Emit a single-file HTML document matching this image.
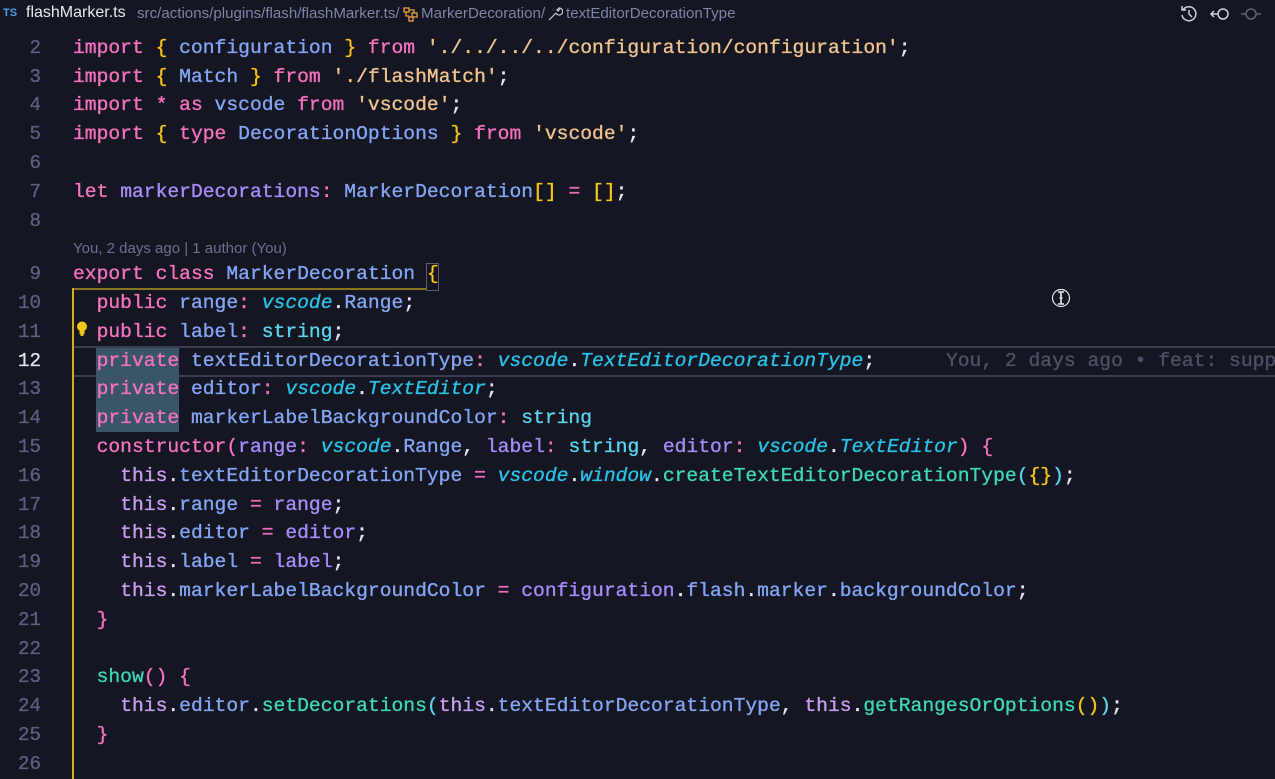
<!DOCTYPE html>
<html><head><meta charset="utf-8"><style>
html,body{margin:0;padding:0;background:#141621;width:1275px;height:779px;overflow:hidden}
.hdr{position:absolute;left:0;top:0;width:1275px;height:28px;font-family:"Liberation Sans",sans-serif;font-size:15.1px;color:#7d84a6;white-space:nowrap}
.hdr span{position:absolute;top:5px}
.ln{position:absolute;left:0;width:41px;text-align:right;font-family:"Liberation Mono",monospace;font-size:19.2px;color:#5c6080;line-height:28.8px;-webkit-text-stroke:0.3px currentColor}
.cd{position:absolute;left:73px;font-family:"Liberation Mono",monospace;font-size:19.67px;line-height:28.8px;color:#82a5f5;white-space:pre;-webkit-text-stroke:0.35px currentColor}
.cd span{-webkit-text-stroke:0.35px currentColor}
.k{color:#f471c0}.s{color:#efc28e}.y{color:#f5c518}.p{color:#a78bfa}.t{color:#2ac0e8;font-style:italic}.c{color:#5ad4f0}.th{color:#c99cf0}.w{color:#e6e6f0}.g{color:#3fd6b8}.o{color:#f471c0}
</style></head><body>
<div class="hdr">
<span style="left:3px;top:7px;font-size:11px;font-weight:bold;color:#4aa0e8">TS</span>
<span style="left:26px;color:#e8e8f0;font-size:16px;top:4px">flashMarker.ts</span>
<span style="left:137px">src/actions/plugins/flash/flashMarker.ts/</span>
<svg style="position:absolute;left:403px;top:6px" width="16" height="16" viewBox="0 0 16 16" fill="none" stroke="#e8a33d" stroke-width="1.3"><rect x="1" y="2" width="5" height="4"/><rect x="9" y="7" width="5" height="4"/><rect x="6" y="11" width="4" height="4"/><path d="M3 6v4h3M6 4h5v3"/></svg>
<span style="left:421px">MarkerDecoration/</span>
<svg style="position:absolute;left:547px;top:5px" width="16" height="17" viewBox="0 0 16 17" fill="none" stroke="#d0d0e0" stroke-width="1.2"><path d="M2 15l7-7M9 8a3.5 3.5 0 1 0 3-5l-2 2 1 1 2-2"/></svg>
<span style="left:566px">textEditorDecorationType</span>
<svg style="position:absolute;left:1179px;top:4px" width="20" height="20" viewBox="0 0 20 20" fill="none" stroke="#cfd0dc" stroke-width="1.5"><path d="M4 6a7 7 0 1 1-1 5M3 2v4h4M10 6v4l3 3"/></svg>
<svg style="position:absolute;left:1209px;top:4px" width="22" height="20" viewBox="0 0 22 20" fill="none" stroke="#cfd0dc" stroke-width="1.5"><circle cx="14" cy="10" r="5"/><path d="M9 10H2M5 7l-3 3 3 3"/></svg>
<svg style="position:absolute;left:1240px;top:4px" width="22" height="20" viewBox="0 0 22 20" fill="none" stroke="#5f6275" stroke-width="1.5"><circle cx="11" cy="10" r="5"/><path d="M6 10H1M16 10h5"/></svg>
</div>

<div class="ln" style="top:34px">2</div>
<div class="ln" style="top:63px">3</div>
<div class="ln" style="top:91px">4</div>
<div class="ln" style="top:120px">5</div>
<div class="ln" style="top:149px">6</div>
<div class="ln" style="top:178px">7</div>
<div class="ln" style="top:207px">8</div>
<div class="ln" style="top:260px">9</div>
<div class="ln" style="top:289px">10</div>
<div class="ln" style="top:318px">11</div>
<div class="ln" style="top:347px;color:#e4e4ec">12</div>
<div class="ln" style="top:375px">13</div>
<div class="ln" style="top:404px">14</div>
<div class="ln" style="top:433px">15</div>
<div class="ln" style="top:462px">16</div>
<div class="ln" style="top:491px">17</div>
<div class="ln" style="top:519px">18</div>
<div class="ln" style="top:548px">19</div>
<div class="ln" style="top:577px">20</div>
<div class="ln" style="top:606px">21</div>
<div class="ln" style="top:635px">22</div>
<div class="ln" style="top:663px">23</div>
<div class="ln" style="top:692px">24</div>
<div class="ln" style="top:721px">25</div>
<div class="ln" style="top:750px">26</div>

<div style="position:absolute;left:73px;top:346px;width:1202px;height:27px;border-top:2px solid #3a3d52;border-bottom:2px solid #3a3d52"></div>
<div style="position:absolute;left:96px;top:348px;width:83px;height:84px;background:#3a5566"></div>
<div style="position:absolute;left:72px;top:288px;width:355px;height:2px;background:#8a7420"></div>
<div style="position:absolute;left:72px;top:288px;width:2px;height:491px;background:#d9ad14"></div>
<div style="position:absolute;left:426px;top:263px;width:11px;height:26px;border:1px solid #5a5d70"></div>
<svg style="position:absolute;left:76px;top:321px" width="12" height="16" viewBox="0 0 12 16"><circle cx="6" cy="5.5" r="5" fill="#f5c518"/><rect x="3.5" y="9" width="5" height="4" fill="#f5c518"/><rect x="4.5" y="13" width="3" height="2" fill="#f5c518"/></svg>

<div class="cd" style="top:34px"><span class="k">import</span> <span class="y">{</span> configuration <span class="y">}</span> <span class="k">from</span> <span class="s">'./../../../configuration/configuration'</span><span class="w">;</span></div>
<div class="cd" style="top:63px"><span class="k">import</span> <span class="y">{</span> Match <span class="y">}</span> <span class="k">from</span> <span class="s">'./flashMatch'</span><span class="w">;</span></div>
<div class="cd" style="top:91px"><span class="k">import</span> <span class="k">*</span> <span class="k">as</span> vscode <span class="k">from</span> <span class="s">'vscode'</span><span class="w">;</span></div>
<div class="cd" style="top:120px"><span class="k">import</span> <span class="y">{</span> <span class="k">type</span> DecorationOptions <span class="y">}</span> <span class="k">from</span> <span class="s">'vscode'</span><span class="w">;</span></div>
<div class="cd" style="top:178px"><span class="k">let</span> <span class="p">markerDecorations</span><span class="k">:</span> MarkerDecoration<span class="y">[]</span> <span class="k">=</span> <span class="y">[]</span><span class="w">;</span></div>
<div style="position:absolute;left:73px;top:240px;font-family:'Liberation Sans',sans-serif;font-size:15px;color:#6c7090">You, 2 days ago | 1 author (You)</div>
<div class="cd" style="top:260px"><span class="k">export</span> <span class="k">class</span> MarkerDecoration <span class="y">{</span></div>
<div class="cd" style="top:289px">  <span class="k">public</span> range<span class="k">:</span> <span class="t">vscode</span><span class="w">.</span>Range<span class="w">;</span></div>
<div class="cd" style="top:318px">  <span class="k">public</span> label<span class="k">:</span> <span class="c">string</span><span class="w">;</span></div>
<div class="cd" style="top:347px">  <span class="k">private</span> textEditorDecorationType<span class="k">:</span> <span class="t">vscode</span><span class="w">.</span><span class="t">TextEditorDecorationType</span><span class="w">;</span>      <span style="color:#4e5166">You, 2 days ago • feat: support</span></div>
<div class="cd" style="top:375px">  <span class="k">private</span> editor<span class="k">:</span> <span class="t">vscode</span><span class="w">.</span><span class="t">TextEditor</span><span class="w">;</span></div>
<div class="cd" style="top:404px">  <span class="k">private</span> markerLabelBackgroundColor<span class="k">:</span> <span class="c">string</span></div>
<div class="cd" style="top:433px">  <span class="k">constructor</span><span class="k">(</span><span class="p">range</span><span class="k">:</span> <span class="t">vscode</span><span class="w">.</span>Range<span class="w">,</span> <span class="p">label</span><span class="k">:</span> <span class="c">string</span><span class="w">,</span> <span class="p">editor</span><span class="k">:</span> <span class="t">vscode</span><span class="w">.</span><span class="t">TextEditor</span><span class="k">)</span> <span class="k">{</span></div>
<div class="cd" style="top:462px">    <span class="th">this</span><span class="w">.</span>textEditorDecorationType <span class="k">=</span> <span class="t">vscode</span><span class="w">.</span><span class="t">window</span><span class="w">.</span><span class="g">createTextEditorDecorationType</span><span class="c">(</span><span class="y">{}</span><span class="c">)</span><span class="w">;</span></div>
<div class="cd" style="top:491px">    <span class="th">this</span><span class="w">.</span>range <span class="k">=</span> <span class="p">range</span><span class="w">;</span></div>
<div class="cd" style="top:519px">    <span class="th">this</span><span class="w">.</span>editor <span class="k">=</span> <span class="p">editor</span><span class="w">;</span></div>
<div class="cd" style="top:548px">    <span class="th">this</span><span class="w">.</span>label <span class="k">=</span> <span class="p">label</span><span class="w">;</span></div>
<div class="cd" style="top:577px">    <span class="th">this</span><span class="w">.</span>markerLabelBackgroundColor <span class="k">=</span> <span class="p">configuration</span><span class="w">.</span>flash<span class="w">.</span>marker<span class="w">.</span>backgroundColor<span class="w">;</span></div>
<div class="cd" style="top:606px">  <span class="k">}</span></div>
<div class="cd" style="top:663px">  <span class="g">show</span><span class="k">()</span> <span class="k">{</span></div>
<div class="cd" style="top:692px">    <span class="th">this</span><span class="w">.</span>editor<span class="w">.</span><span class="g">setDecorations</span><span class="c">(</span><span class="th">this</span><span class="w">.</span>textEditorDecorationType<span class="w">,</span> <span class="th">this</span><span class="w">.</span><span class="g">getRangesOrOptions</span><span class="y">()</span><span class="c">)</span><span class="w">;</span></div>
<div class="cd" style="top:721px">  <span class="k">}</span></div>

<svg style="position:absolute;left:1051px;top:288px" width="20" height="20" viewBox="0 0 20 20" fill="none" stroke="#e8e8e8" stroke-width="1.2"><circle cx="10" cy="10" r="8.5" fill="#141621"/><path d="M7 4h6M7 16h6M10 4v12M8.5 10h3" stroke-width="1.6"/></svg>
</body></html>
